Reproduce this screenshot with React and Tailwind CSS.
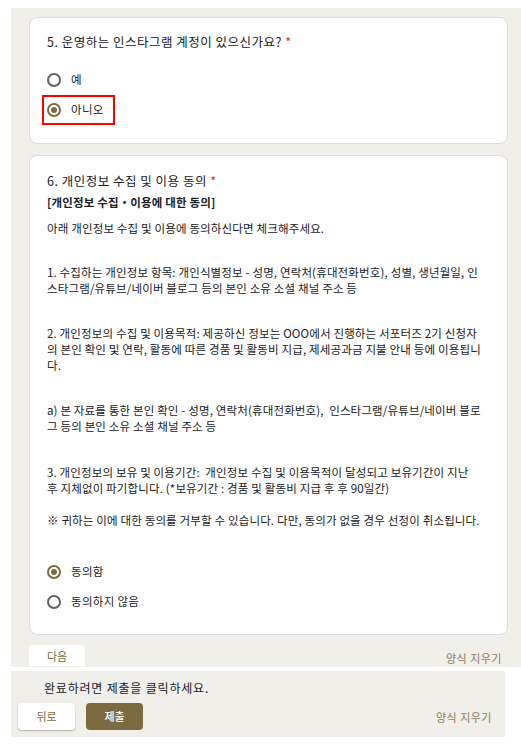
import React from "react";

const font = { fontFamily: '"Noto Sans CJK KR", "Noto Sans", sans-serif' };

function Radio({ checked }) {
  return checked ? (
    <span className="flex h-[14px] w-[14px] shrink-0 items-center justify-center rounded-full border-2 border-[#7c6a41]">
      <span className="h-[6px] w-[6px] rounded-full bg-[#7c6a41]" />
    </span>
  ) : (
    <span className="h-[14px] w-[14px] shrink-0 rounded-full border-2 border-[#5f6368]" />
  );
}

function Option({ checked, label, boxed }) {
  return (
    <div className="relative flex h-[30px] items-center gap-[10px]">
      <Radio checked={checked} />
      <span className="text-[11.5px] tracking-[0.3px] text-[#202124]">{label}</span>
      {boxed && (
        <div className="pointer-events-none absolute left-[-5px] top-[0px] h-[30px] w-[73px] border-2 border-[#ff0000]" />
      )}
    </div>
  );
}

export default function App() {
  return (
    <div className="h-[744px] w-[521px] bg-white pt-[8px]" style={font}>
      <div className="ml-[11px] h-[659px] bg-[#f0efea] pl-[18px] pr-[13px] pt-[9px]">
        {/* Card 5 */}
        <div className="h-[127px] rounded-lg border border-[#dadce0] bg-white px-[17px] pt-[15px]">
          <div className="text-[12.5px] leading-[18px] tracking-[0.5px] text-[#202124]">
            5. 운영하는 인스타그램 계정이 있으신가요?<span className="text-[#d93025]"> *</span>
          </div>
          <div className="mt-[14px]">
            <Option label="예" />
            <Option label="아니오" checked boxed />
          </div>
        </div>

        {/* Card 6 */}
        <div className="mt-[11px] h-[480px] rounded-lg border border-[#dadce0] bg-white px-[17px] pt-[16px]">
          <div className="text-[12.5px] leading-[18px] tracking-[0.5px] text-[#202124]">
            6. 개인정보 수집 및 이용 동의<span className="text-[#d93025]"> *</span>
          </div>
          <div className="text-[11.5px] leading-[16px] tracking-[0.15px] text-[#202124]">
            <div className="mt-[4px] font-bold">[개인정보 수집・이용에 대한 동의]</div>
            <div className="mt-[10px] whitespace-nowrap">아래 개인정보 수집 및 이용에 동의하신다면 체크해주세요.</div>
            <div className="mt-[28px] whitespace-nowrap">
              1. 수집하는 개인정보 항목: 개인식별정보 - 성명, 연락처(휴대전화번호), 성별, 생년월일, 인<br />
              스타그램/유튜브/네이버 블로그 등의 본인 소유 소셜 채널 주소 등
            </div>
            <div className="mt-[29px] whitespace-nowrap">
              2. 개인정보의 수집 및 이용목적: 제공하신 정보는 OOO에서 진행하는 서포터즈 2기 신청자<br />
              의 본인 확인 및 연락, 활동에 따른 경품 및 활동비 지급, 제세공과금 지불 안내 등에 이용됩니<br />
              다.
            </div>
            <div className="mt-[29px] whitespace-nowrap">
              a) 본 자료를 통한 본인 확인 - 성명, 연락처(휴대전화번호),&nbsp; 인스타그램/유튜브/네이버 블로<br />
              그 등의 본인 소유 소셜 채널 주소 등
            </div>
            <div className="mt-[30px] whitespace-nowrap">
              3. 개인정보의 보유 및 이용기간:&nbsp; 개인정보 수집 및 이용목적이 달성되고 보유기간이 지난<br />
              후 지체없이 파기합니다. (*보유기간 : 경품 및 활동비 지급 후 후 90일간)
            </div>
            <div className="mt-[16px] whitespace-nowrap">
              ※ 귀하는 이에 대한 동의를 거부할 수 있습니다. 다만, 동의가 없을 경우 선정이 취소됩니다.
            </div>
          </div>
          <div className="mt-[29px]">
            <Option label="동의함" checked />
            <Option label="동의하지 않음" />
          </div>
        </div>

        {/* Next row */}
        <div className="mt-[10px] flex items-start justify-between pr-[6px]">
          <div className="flex h-[21px] w-[56px] items-center justify-center rounded-t bg-white pt-[2px] text-[11px] text-[#7c6a41]">
            다음
          </div>
          <div className="pt-[5px] text-[11px] tracking-[0.5px] text-[#8c7b5a]">양식 지우기</div>
        </div>
      </div>

      {/* Bottom panel */}
      <div className="ml-[11px] mt-[4px] h-[66px] w-[494px] bg-[#f0efea] pl-[7px] pr-[13px] pt-[8px]">
        <div className="pl-[26px] text-[12px] leading-[18px] tracking-[0.8px] text-[#202124]">
          완료하려면 제출을 클릭하세요.
        </div>
        <div className="mt-[6px] flex items-center">
          <div className="flex h-[27px] w-[57px] items-center justify-center rounded bg-white text-[11px] text-[#7c6a41] shadow-[0_1px_2px_rgba(0,0,0,0.25)]">
            뒤로
          </div>
          <div className="ml-[11px] flex h-[27px] w-[57px] items-center justify-center rounded bg-[#7c6a41] text-[11px] font-medium text-white">
            제출
          </div>
          <div className="ml-auto pt-[1px] text-[11px] tracking-[0.5px] text-[#8c7b5a]">양식 지우기</div>
        </div>
      </div>
    </div>
  );
}
